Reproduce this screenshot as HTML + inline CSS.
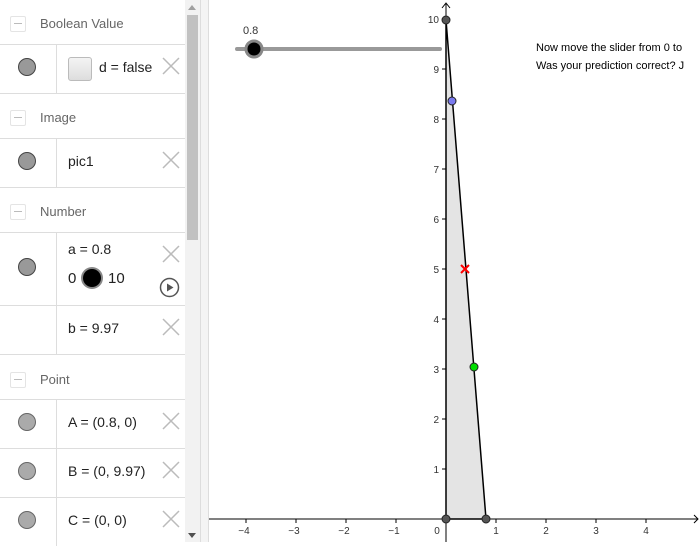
<!DOCTYPE html>
<html><head><style>
body{margin:0;width:700px;height:542px;overflow:hidden;background:#fff;font-family:"Liberation Sans",sans-serif;position:relative}
.a{position:absolute}
.hd{position:absolute;left:0;width:185px;border-bottom:1px solid #ddd;color:#666;font-size:13px}
.hd .m{position:absolute;left:10px;width:14px;height:14px;border:1px solid #e4e4e4;border-radius:2px}
.hd .m:after{content:"";position:absolute;left:3px;top:6px;width:8px;height:1px;background:#bbb}
.hd span{position:absolute;left:40px}
.row{position:absolute;left:0;width:185px;border-bottom:1px solid #ddd;font-size:14px;color:#222}
.row .c{position:absolute;left:56px;top:0;bottom:0;border-left:1px solid #ddd}
.dot{position:absolute;left:18px;width:18px;height:18px;border-radius:50%;border:1px solid #444;box-sizing:border-box}
.x{position:absolute;left:162px;width:18px;height:18px}
.t{position:absolute;left:68px}
</style></head><body>
<div class="hd" style="top:0;height:44px"><div class="m" style="top:16px"></div><span style="top:16px">Boolean Value</span></div>
<div class="row" style="top:45px;height:48px"><div class="c"></div><div class="dot" style="top:13px;background:#999"></div>
<div class="a" style="left:68px;top:12px;width:22px;height:22px;border:1px solid #bbb;border-radius:3px;background:linear-gradient(#f4f4f4,#ddd)"></div><div class="t" style="left:99px;top:14px">d = false</div>
<svg class="x" style="top:12px" viewBox="0 0 18 18"><path d="M1 1L17 17M17 1L1 17" stroke="#bbb" stroke-width="1.5"/></svg></div>
<div class="hd" style="top:94px;height:44px"><div class="m" style="top:16px"></div><span style="top:16px">Image</span></div>
<div class="row" style="top:139px;height:48px"><div class="c"></div><div class="dot" style="top:13px;background:#999"></div><div class="t" style="top:14px">pic1</div>
<svg class="x" style="top:12px" viewBox="0 0 18 18"><path d="M1 1L17 17M17 1L1 17" stroke="#bbb" stroke-width="1.5"/></svg></div>
<div class="hd" style="top:188px;height:44px"><div class="m" style="top:16px"></div><span style="top:16px">Number</span></div>
<div class="row" style="top:233px;height:72px"><div class="c"></div><div class="dot" style="top:25px;background:#999"></div>
<div class="t" style="top:8px">a = 0.8</div>
<div class="t" style="top:37px;font-size:15px">0</div>
<div class="a" style="left:83px;top:36px;width:18px;height:18px;border-radius:50%;background:#000;box-shadow:0 0 0 2px #888"></div>
<div class="t" style="left:108px;top:37px;font-size:15px">10</div>
<svg class="x" style="top:12px" viewBox="0 0 18 18"><path d="M1 1L17 17M17 1L1 17" stroke="#bbb" stroke-width="1.5"/></svg>
<svg class="a" style="left:159px;top:44px" width="21" height="21" viewBox="0 0 21 21"><circle cx="10.5" cy="10.5" r="9" fill="none" stroke="#555" stroke-width="1.5"/><path d="M8 6.5L14.5 10.5L8 14.5Z" fill="#555"/></svg></div>
<div class="row" style="top:306px;height:48px"><div class="c"></div><div class="t" style="top:14px">b = 9.97</div>
<svg class="x" style="top:12px" viewBox="0 0 18 18"><path d="M1 1L17 17M17 1L1 17" stroke="#bbb" stroke-width="1.5"/></svg></div>
<div class="hd" style="top:355px;height:44px"><div class="m" style="top:17px"></div><span style="top:17px">Point</span></div>
<div class="row" style="top:400px;height:48px"><div class="c"></div><div class="dot" style="top:13px;background:#aaa;border-color:#666"></div><div class="t" style="top:14px">A = (0.8, 0)</div>
<svg class="x" style="top:12px" viewBox="0 0 18 18"><path d="M1 1L17 17M17 1L1 17" stroke="#bbb" stroke-width="1.5"/></svg></div>
<div class="row" style="top:449px;height:48px"><div class="c"></div><div class="dot" style="top:13px;background:#aaa;border-color:#666"></div><div class="t" style="top:14px">B = (0, 9.97)</div>
<svg class="x" style="top:12px" viewBox="0 0 18 18"><path d="M1 1L17 17M17 1L1 17" stroke="#bbb" stroke-width="1.5"/></svg></div>
<div class="row" style="top:498px;height:48px;border:0"><div class="c"></div><div class="dot" style="top:13px;background:#aaa;border-color:#666"></div><div class="t" style="top:14px">C = (0, 0)</div>
<svg class="x" style="top:12px" viewBox="0 0 18 18"><path d="M1 1L17 17M17 1L1 17" stroke="#bbb" stroke-width="1.5"/></svg></div>
<div class="a" style="left:185px;top:0;width:15px;height:542px;background:#f2f2f2"></div>
<div class="a" style="left:187px;top:15px;width:11px;height:225px;background:#c1c1c1"></div>
<div class="a" style="left:188px;top:5px;width:0;height:0;border:4px solid transparent;border-bottom:5px solid #a0a0a0;border-top:0"></div>
<div class="a" style="left:188px;top:533px;width:0;height:0;border:4px solid transparent;border-top:5px solid #505050;border-bottom:0"></div>
<div class="a" style="left:200px;top:0;width:7px;height:542px;background:#f4f4f4;border-left:1px solid #ddd;border-right:1px solid #ddd"></div>
<svg class="a" style="left:0;top:0" width="700" height="542" viewBox="0 0 700 542" font-family="Liberation Sans,sans-serif" font-size="10" fill="#333">
<polygon points="446,20 446,519 486,519" fill="#e4e4e4" stroke="#000" stroke-width="1.5"/>
<line x1="209" y1="519" x2="698" y2="519" stroke="#000"/>
<path d="M694 515L698 519L694 523" fill="none" stroke="#000"/>
<line x1="446" y1="4" x2="446" y2="542" stroke="#000"/>
<path d="M442 8L446 3L450 8" fill="none" stroke="#000"/>
<g stroke="#000">
<line x1="246" y1="519" x2="246" y2="523"/><line x1="296" y1="519" x2="296" y2="523"/><line x1="346" y1="519" x2="346" y2="523"/><line x1="396" y1="519" x2="396" y2="523"/><line x1="496" y1="519" x2="496" y2="523"/><line x1="546" y1="519" x2="546" y2="523"/><line x1="596" y1="519" x2="596" y2="523"/><line x1="646" y1="519" x2="646" y2="523"/>
<line x1="442" y1="469" x2="446" y2="469"/><line x1="442" y1="419" x2="446" y2="419"/><line x1="442" y1="369" x2="446" y2="369"/><line x1="442" y1="319" x2="446" y2="319"/><line x1="442" y1="269" x2="446" y2="269"/><line x1="442" y1="219" x2="446" y2="219"/><line x1="442" y1="169" x2="446" y2="169"/><line x1="442" y1="119" x2="446" y2="119"/><line x1="442" y1="69" x2="446" y2="69"/>
</g>
<g text-anchor="middle"><text x="244" y="534">−4</text><text x="294" y="534">−3</text><text x="344" y="534">−2</text><text x="394" y="534">−1</text><text x="437" y="534">0</text><text x="496" y="534">1</text><text x="546" y="534">2</text><text x="596" y="534">3</text><text x="646" y="534">4</text></g>
<g text-anchor="end"><text x="439" y="473">1</text><text x="439" y="423">2</text><text x="439" y="373">3</text><text x="439" y="323">4</text><text x="439" y="273">5</text><text x="439" y="223">6</text><text x="439" y="173">7</text><text x="439" y="123">8</text><text x="439" y="73">9</text><text x="439" y="23">10</text></g>
<line x1="237" y1="49" x2="440" y2="49" stroke="#999" stroke-width="4" stroke-linecap="round"/>
<circle cx="254" cy="49" r="8" fill="#000" stroke="#888" stroke-width="3"/>
<text x="243" y="34" font-size="11">0.8</text>
<circle cx="446" cy="20" r="4" fill="#555" stroke="#222"/>
<circle cx="446" cy="519" r="4" fill="#555" stroke="#222"/>
<circle cx="486" cy="519" r="4" fill="#555" stroke="#222"/>
<circle cx="452" cy="101" r="4" fill="#7a7aee" stroke="#222"/>
<circle cx="474" cy="367" r="4" fill="#00dd00" stroke="#222"/>
<path d="M461 265L469 273M469 265L461 273" stroke="#f00" stroke-width="2"/>
<text x="536" y="51" font-size="11" fill="#000">Now move the slider from 0 to</text>
<text x="536" y="69" font-size="11" fill="#000">Was your prediction correct? J</text>
</svg>
</body></html>
